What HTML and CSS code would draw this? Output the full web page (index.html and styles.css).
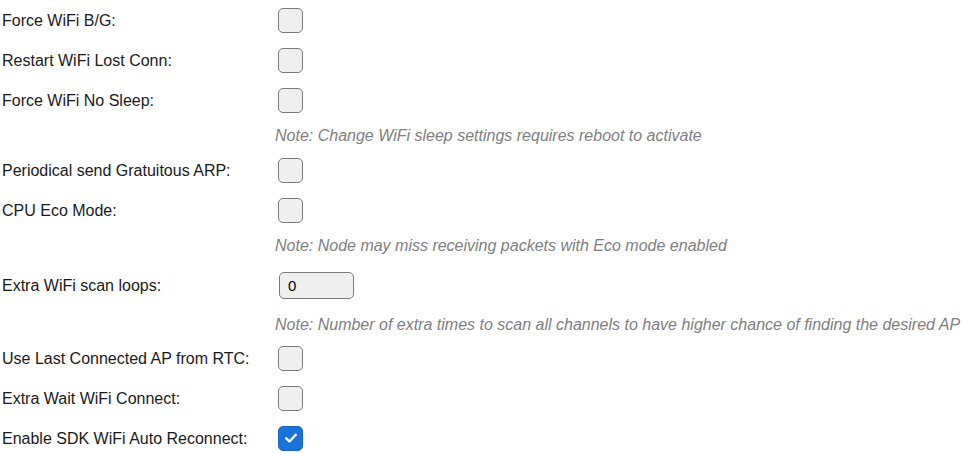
FILE: index.html
```html
<!DOCTYPE html>
<html>
<head>
<meta charset="utf-8">
<link rel="stylesheet" href="styles.css">
</head>
<body>
<div class="form">
  <div class="row"><div class="label">Force WiFi B/G:</div><div class="cell"><span class="box"></span></div></div>
  <div class="row"><div class="label">Restart WiFi Lost Conn:</div><div class="cell"><span class="box"></span></div></div>
  <div class="row"><div class="label">Force WiFi No Sleep:</div><div class="cell"><span class="box"></span></div></div>
  <div class="row note-row"><div class="label"></div><div class="note">Note: Change WiFi sleep settings requires reboot to activate</div></div>
  <div class="row"><div class="label">Periodical send Gratuitous ARP:</div><div class="cell"><span class="box"></span></div></div>
  <div class="row"><div class="label">CPU Eco Mode:</div><div class="cell"><span class="box"></span></div></div>
  <div class="row note-row"><div class="label"></div><div class="note">Note: Node may miss receiving packets with Eco mode enabled</div></div>
  <div class="row input-row"><div class="label">Extra WiFi scan loops:</div><div class="cell"><span class="num">0</span></div></div>
  <div class="row note-row short"><div class="label"></div><div class="note">Note: Number of extra times to scan all channels to have higher chance of finding the desired AP</div></div>
  <div class="row"><div class="label">Use Last Connected AP from RTC:</div><div class="cell"><span class="box"></span></div></div>
  <div class="row"><div class="label">Extra Wait WiFi Connect:</div><div class="cell"><span class="box"></span></div></div>
  <div class="row"><div class="label">Enable SDK WiFi Auto Reconnect:</div><div class="cell"><span class="box checked"><svg width="16" height="16" viewBox="0 0 16 16"><path d="M3.2 8.4 L6.5 11.5 L12.8 4.8" fill="none" stroke="#fff" stroke-width="2.4" stroke-linecap="round" stroke-linejoin="round"/></svg></span></div></div>
</div>
</body>
</html>
```
FILE: styles.css
```css
html, body {
  margin: 0;
  padding: 0;
  background: #fff;
}
body {
  font-family: "Liberation Sans", Arial, sans-serif;
  font-size: 16px;
  color: #1a1a1a;
  overflow: hidden;
}
.form {
  display: flex;
  flex-direction: column;
}
.row {
  display: flex;
  align-items: center;
  height: 40px;
}
.note-row {
  height: 30px;
}
.note-row.short {
  height: 28px;
}
.input-row {
  height: 50px;
}
.label {
  width: 278px;
  flex: none;
  padding-left: 2px;
  padding-top: 2px;
  box-sizing: border-box;
  white-space: nowrap;
}
.cell {
  display: flex;
  align-items: center;
}
.box {
  display: flex;
  align-items: center;
  justify-content: center;
  width: 25px;
  height: 25px;
  box-sizing: border-box;
  border: 1px solid #7a7a7a;
  border-radius: 5px;
  background: #efefef;
}
.box.checked {
  background: #1a73d9;
  border-color: #1a66c6;
}
.note {
  margin-left: -3px;
  padding-top: 2px;
  font-style: italic;
  color: #808080;
  white-space: nowrap;
}
.num {
  display: flex;
  align-items: center;
  width: 75px;
  height: 27px;
  box-sizing: border-box;
  padding-left: 8px;
  margin-left: 1px;
  border: 1px solid #7a7a7a;
  border-radius: 5px;
  background: #efefef;
  font-size: 15px;
  color: #000;
}
```
